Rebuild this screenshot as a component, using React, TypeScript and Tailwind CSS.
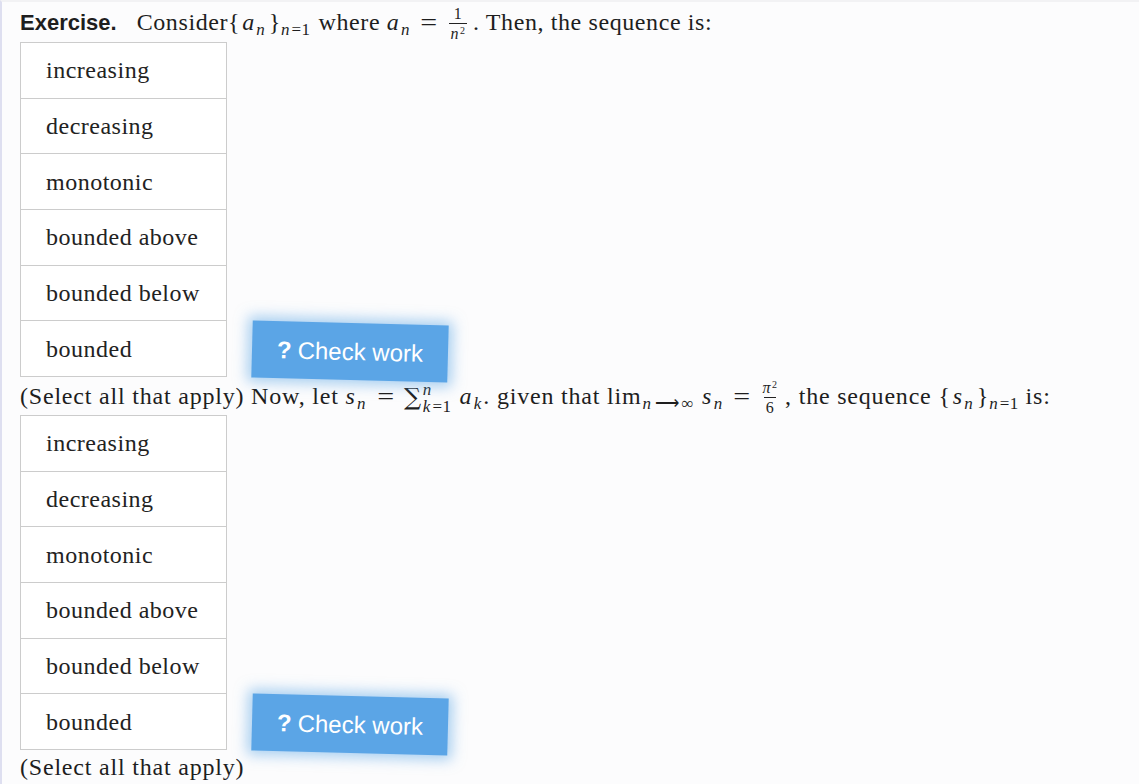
import React from "react";

const serif = { fontFamily: '"Liberation Serif", "Times New Roman", serif' };

function Sub({ children, className = "" }: { children: React.ReactNode; className?: string }) {
  return (
    <span className={"text-[17px] align-[-5px] not-italic tracking-[0.5px] " + className}>{children}</span>
  );
}

function I({ children, className = "" }: { children: React.ReactNode; className?: string }) {
  return <span className={"italic pr-[1.5px] " + className}>{children}</span>;
}

function Eq() {
  return <span className="mx-[11px] inline-block scale-x-125">=</span>;
}

function Frac({ num, den, className = "" }: { num: React.ReactNode; den: React.ReactNode; className?: string }) {
  return (
    <span
      className={
        "inline-flex flex-col items-center align-middle leading-none text-[16px] tracking-normal " + className
      }
    >
      <span className="px-[2px] pb-[1px]">{num}</span>
      <span className="px-[2px] pt-[2px] border-t border-[#222]">{den}</span>
    </span>
  );
}

const options = ["increasing", "decreasing", "monotonic", "bounded above", "bounded below", "bounded"];

function OptionTable() {
  return (
    <div className="w-[207px] border border-[#cccccc] bg-white">
      {options.map((o, i) => (
        <div
          key={o}
          className={
            "flex items-center pl-[25px] text-[24px] text-[#222] tracking-[0.5px] " +
            (i > 0 ? "h-[55.67px] border-t border-[#cccccc]" : "h-[54.67px]")
          }
        >
          {o}
        </div>
      ))}
    </div>
  );
}

function CheckButton() {
  return (
    <div
      className="ml-[25px] mb-[-3px] w-[196px] h-[57px] rotate-[1.5deg] bg-[#5ba5e6] text-white flex items-center justify-center gap-[6px] shadow-[0_0_14px_4px_rgba(91,165,230,0.55)]"
      style={{ fontFamily: '"Liberation Sans", Arial, sans-serif' }}
    >
      <span className="text-[24px] font-bold">?</span>
      <span className="text-[24px]">Check work</span>
    </div>
  );
}

function Block() {
  return (
    <div className="flex items-end">
      <OptionTable />
      <CheckButton />
    </div>
  );
}

export default function App() {
  return (
    <div
      className="min-h-screen w-full bg-[#fcfcfd] border-l-2 border-t-2 border-l-[#dedff0] border-t-[#f2f2f4] pl-[18px] text-[#1e1e1e] overflow-hidden"
      style={serif}
    >
      <div className="h-[40px] leading-[40px] whitespace-nowrap text-[24px] tracking-[0.6px]">
        <span
          className="font-bold text-[22px] tracking-normal"
          style={{ fontFamily: '"Liberation Sans", Arial, sans-serif' }}
        >
          Exercise.
        </span>
        <span className="ml-[20px]">Consider</span>
        <span className="mr-[2px]">{"{"}</span>
        <I>a</I>
        <Sub>
          <I>n</I>
        </Sub>
        <span className="ml-[2px]">{"}"}</span>
        <Sub>
          <I>n</I>=1
        </Sub>
        <span className="ml-[8px]">where</span> <I>a</I>
        <Sub>
          <I>n</I>
        </Sub>
        <Eq />
        <Frac num="1" den={<><I>n</I><sup className="text-[10px]">2</sup></>} className="ml-[1px]" />
        <span className="ml-[6px]">. Then, the sequence is:</span>
      </div>

      <Block />

      <div className="h-[38px] leading-[38px] whitespace-nowrap text-[24px] tracking-[0.8px]">
        (Select all that apply) Now, let <I>s</I>
        <Sub>
          <I>n</I>
        </Sub>
        <Eq />
        <span className="text-[24px] align-[-1px]" style={{ fontFamily: '"DejaVu Serif", serif' }}>
          ∑
        </span>
        <span className="inline-flex flex-col align-middle leading-none text-[17px] tracking-[0.5px] ml-[1px] mr-[8px]">
          <span className="italic">n</span>
          <span>
            <I>k</I>=1
          </span>
        </span>
        <I>a</I>
        <Sub>
          <I>k</I>
        </Sub>
        . given that lim
        <Sub className="ml-[1px]">
          <I>n</I>
          <span className="mx-[2px]">⟶</span>∞
        </Sub>
        <I className="ml-[8px]">s</I>
        <Sub>
          <I>n</I>
        </Sub>
        <Eq />
        <Frac num={<><I>π</I><sup className="text-[10px]">2</sup></>} den="6" />
        <span className="ml-[6px]">, the sequence </span>
        <span className="mr-[2px]">{"{"}</span>
        <I>s</I>
        <Sub>
          <I>n</I>
        </Sub>
        <span className="ml-[2px]">{"}"}</span>
        <Sub>
          <I>n</I>=1
        </Sub>{" "}
        is:
      </div>

      <Block />

      <div className="h-[36px] leading-[34px] whitespace-nowrap text-[24px] tracking-[0.8px]">
        (Select all that apply)
      </div>
    </div>
  );
}
